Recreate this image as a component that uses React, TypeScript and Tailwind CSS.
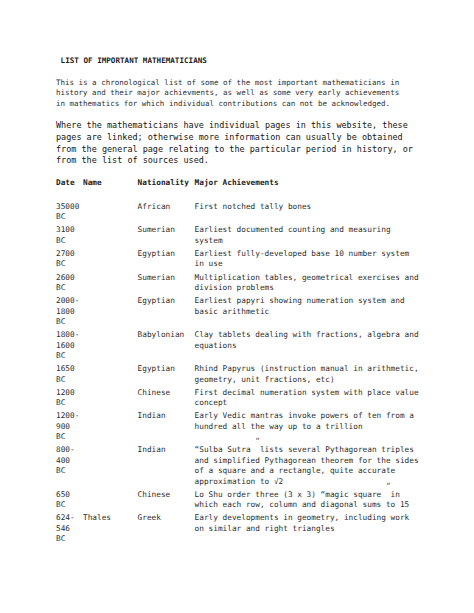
import React from 'react';

type Row = {
  date: string;
  name?: string;
  nationality: string;
  achievement: React.ReactNode;
};

const rows: Row[] = [
  { date: '35000 BC', nationality: 'African', achievement: 'First notched tally bones' },
  { date: '3100 BC', nationality: 'Sumerian', achievement: 'Earliest documented counting and measuring system' },
  { date: '2700 BC', nationality: 'Egyptian', achievement: 'Earliest fully-developed base 10 number system in use' },
  { date: '2600 BC', nationality: 'Sumerian', achievement: 'Multiplication tables, geometrical exercises and division problems' },
  { date: '2000-1800 BC', nationality: 'Egyptian', achievement: 'Earliest papyri showing numeration system and basic arithmetic' },
  { date: '1800-1600 BC', nationality: 'Babylonian', achievement: 'Clay tablets dealing with fractions, algebra and equations' },
  { date: '1650 BC', nationality: 'Egyptian', achievement: 'Rhind Papyrus (instruction manual in arithmetic, geometry, unit fractions, etc)' },
  { date: '1200 BC', nationality: 'Chinese', achievement: 'First decimal numeration system with place value concept' },
  {
    date: '1200-900 BC',
    nationality: 'Indian',
    achievement: (
      <>
        Early Vedic mantras invoke powers of ten from a hundred all the way up to a trillion
        <span className="block whitespace-pre text-[#666]">{'             „'}</span>
      </>
    ),
  },
  {
    date: '800-400 BC',
    nationality: 'Indian',
    achievement: (
      <>
        <span className="whitespace-pre-wrap">
          {'“Sulba Sutra  lists several Pythagorean triples and simplified Pythagorean theorem for the sides of a square and a rectangle, quite accurate'}
        </span>
        <span className="block whitespace-pre">
          {'approximation to √2                      '}
          <span className="text-[#666]">„</span>
        </span>
      </>
    ),
  },
  {
    date: '650 BC',
    nationality: 'Chinese',
    achievement: <span className="whitespace-pre-wrap">{'Lo Shu order three (3 x 3) “magic square  in which each row, column and diagonal sums to 15'}</span>,
  },
  { date: '624-546 BC', name: 'Thales', nationality: 'Greek', achievement: 'Early developments in geometry, including work on similar and right triangles' },
];

const cols = 'grid grid-cols-[27px_54.6px_57px_226px]';

export default function App() {
  return (
    <div className="min-h-[613px] w-[474px] bg-white pl-[56px] pt-[56px] font-['DejaVu_Sans_Mono',monospace] text-[#2e2e2e]">
      <h1 className="whitespace-pre text-[7.6px] font-bold leading-[10.4px] text-[#1c1c1c]">{' LIST OF IMPORTANT MATHEMATICIANS'}</h1>

      <p className="mt-[11.3px] w-[350px] text-[7.5px] leading-[10.4px]">
        This is a chronological list of some of the most important mathematicians in history and their major achievments, as well as some very early achievements in mathematics for which individual contributions can not be acknowledged.
      </p>

      <p className="mt-[11.5px] w-[366px] text-[8.47px] leading-[11.6px] text-[#141414]">
        Where the mathematicians have individual pages in this website, these pages are linked; otherwise more information can usually be obtained from the general page relating to the particular period in history, or from the list of sources used.
      </p>

      {/* table */}
      <div className="mt-[11.5px] text-[7.75px] leading-[10.4px]">
        <div className={`${cols} font-bold text-[#1c1c1c]`}>
          <span>Date</span>
          <span>Name</span>
          <span>Nationality</span>
          <span>Major Achievements</span>
        </div>
        <div className="mt-[13px]">
          {rows.map((r) => (
            <div key={r.date} className={`${cols} pb-[2.8px]`}>
              <span>{r.date}</span>
              <span>{r.name ?? ''}</span>
              <span>{r.nationality}</span>
              <div>{r.achievement}</div>
            </div>
          ))}
        </div>
      </div>
    </div>
  );
}
